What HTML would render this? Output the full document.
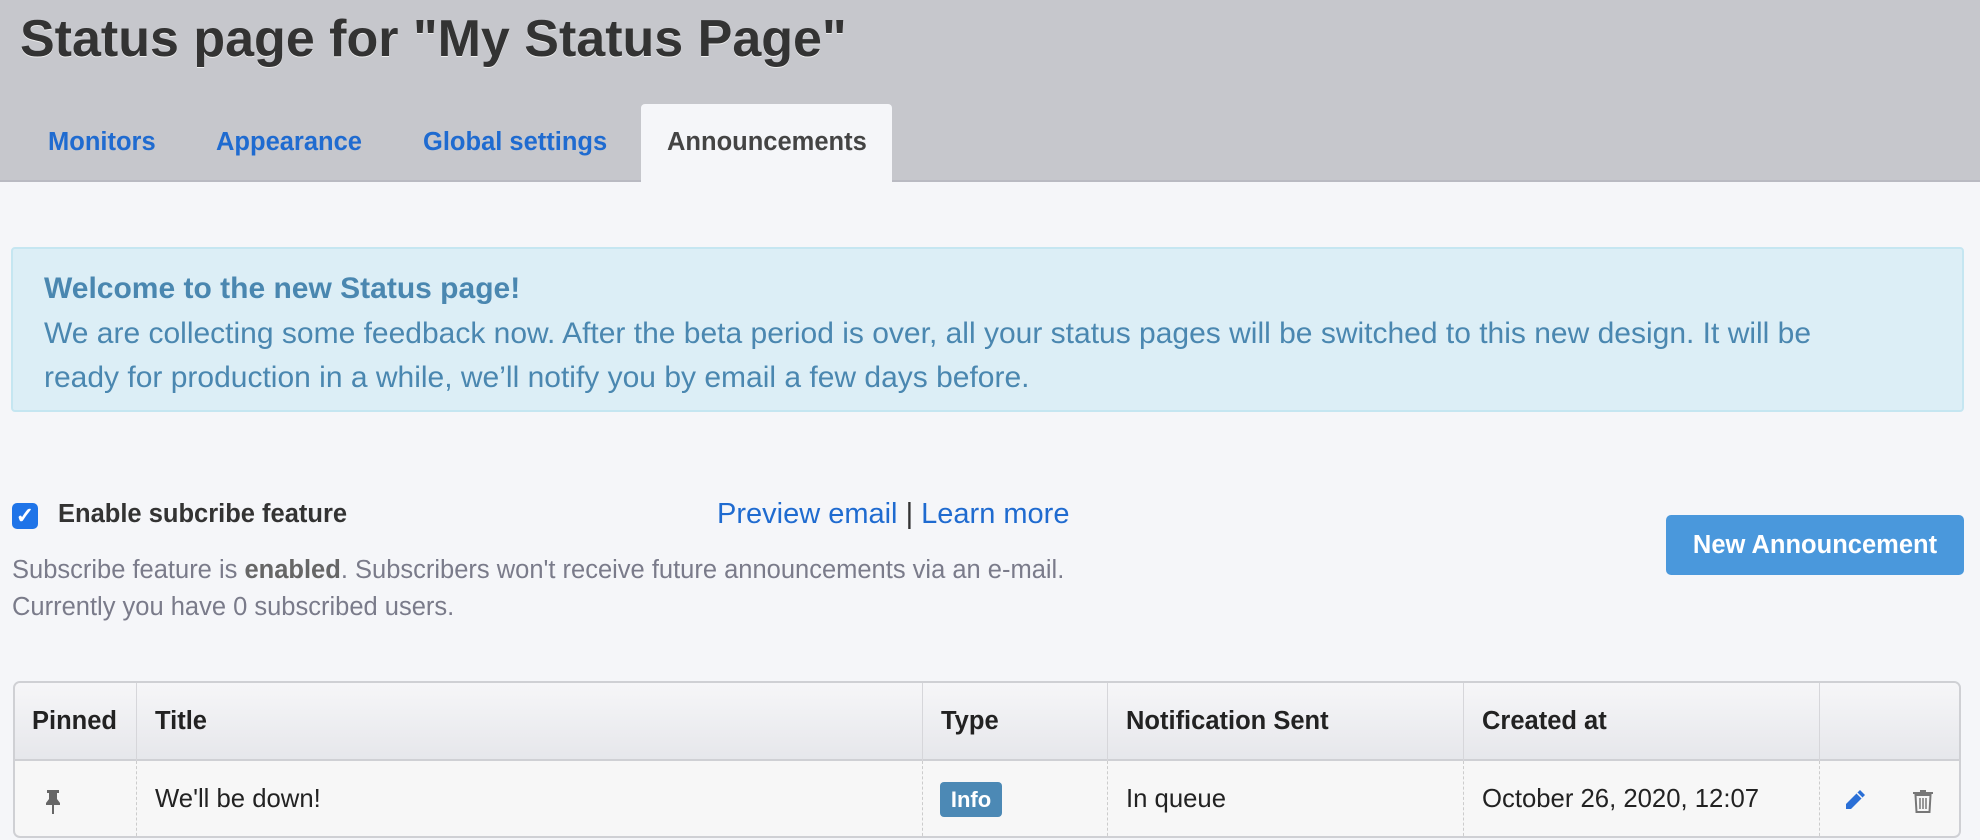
<!DOCTYPE html>
<html><head><meta charset="utf-8"><style>
*{margin:0;padding:0;box-sizing:border-box}
body{width:1980px;height:840px;background:#f5f6f9;font-family:"Liberation Sans",sans-serif;position:relative;overflow:hidden}
.a{position:absolute;white-space:nowrap}
.hdr{position:absolute;left:0;top:0;width:1980px;height:182px;background:#c6c7cc;border-bottom:2px solid #b9bac2}
h1{position:absolute;left:20px;top:9px;font-size:52px;font-weight:bold;color:#333;text-shadow:0 1px 0 #eee}
.tab{position:absolute;top:128px;font-size:25.5px;font-weight:bold;color:#1f6bd0}
.act{position:absolute;left:641px;top:104px;width:251px;height:80px;background:#f5f6f9;border-radius:4px 4px 0 0}
.alert{position:absolute;left:11px;top:247px;width:1953px;height:165px;background:#dceef6;border:2px solid #c5e6f1;border-radius:4px;color:#4a87b0;font-size:30px;line-height:44.5px;padding:18px 0 0 31px}
.btn{position:absolute;left:1666px;top:515px;width:298px;height:60px;background:#4a98dc;border-radius:5px;color:#fff;font-weight:bold;font-size:25.5px;text-align:center;line-height:60px}
.tbl{position:absolute;left:13px;top:681px;width:1948px;height:157px;border:2px solid #cfd0d4;border-radius:7px;overflow:hidden;background:#f7f7f7}
.th{position:absolute;left:0;top:0;width:100%;height:78px;background:linear-gradient(#f6f6f8,#e6e7eb);border-bottom:2px solid #cfd0d4}
.vl{position:absolute;top:0;height:78px;border-left:1px solid #d6d6da}
.vd{position:absolute;top:78px;height:80px;border-left:1px dashed #ccc}
.hd{position:absolute;top:24px;font-size:25.5px;font-weight:bold;color:#222}
.td{position:absolute;top:102px;font-size:25.7px;color:#222}
</style></head><body>
<div class="hdr"></div>
<h1>Status page for "My Status Page"</h1>
<div class="act"></div>
<div class="tab" style="left:48px">Monitors</div>
<div class="tab" style="left:216px">Appearance</div>
<div class="tab" style="left:423px">Global settings</div>
<div class="tab" style="left:667px;color:#444">Announcements</div>
<div class="alert"><b>Welcome to the new Status page!</b><br>We are collecting some feedback now. After the beta period is over, all your status pages will be switched to this new design. It will be<br>ready for production in a while, we’ll notify you by email a few days before.</div>
<div class="a" style="left:12px;top:503px;width:26px;height:26px;background:#1f74e8;border-radius:5px;color:#fff;font-size:22px;text-align:center;line-height:26px;font-weight:bold">✓</div>
<div class="a" style="left:58px;top:500px;font-size:25.5px;font-weight:bold;color:#333">Enable subcribe feature</div>
<div class="a" style="left:717px;top:498px;font-size:29px;color:#1f6bd0">Preview email <span style="color:#333">|</span> Learn more</div>
<div class="a" style="left:12px;top:552px;font-size:25.5px;color:#7a7b8a;line-height:37px">Subscribe feature is <b style="color:#666">enabled</b>. Subscribers won't receive future announcements via an e-mail.<br>Currently you have 0 subscribed users.</div>
<div class="btn">New Announcement</div>
<div class="tbl">
<div class="th"></div>
<div class="vl" style="left:121px"></div><div class="vl" style="left:907px"></div><div class="vl" style="left:1092px"></div><div class="vl" style="left:1448px"></div><div class="vl" style="left:1804px"></div>
<div class="vd" style="left:121px"></div><div class="vd" style="left:907px"></div><div class="vd" style="left:1092px"></div><div class="vd" style="left:1448px"></div><div class="vd" style="left:1804px"></div>
<div class="hd" style="left:17px">Pinned</div>
<div class="hd" style="left:140px">Title</div>
<div class="hd" style="left:926px">Type</div>
<div class="hd" style="left:1111px">Notification Sent</div>
<div class="hd" style="left:1467px">Created at</div>
<svg class="a" style="left:29px;top:106px" width="18" height="26" viewBox="0 0 18 26"><path d="M3 1h12v3h-2v6l3 4v2H2v-2l3-4V4H3z" fill="#666"/><rect x="8" y="16" width="2" height="9" fill="#666"/></svg>
<div class="td" style="left:140px">We'll be down!</div>
<div class="a" style="left:925px;top:99px;width:62px;height:35px;background:#4c89b5;border-radius:4px;color:#fff;font-weight:bold;font-size:22px;text-align:center;line-height:35px">Info</div>
<div class="td" style="left:1111px">In queue</div>
<div class="td" style="left:1467px">October 26, 2020, 12:07</div>
<svg class="a" style="left:1828px;top:105px" width="24" height="24" viewBox="0 0 24 24"><path d="M17 2l5 5L8 21H3v-5z" fill="#2a6fd6"/><path d="M14 5l5 5" stroke="#f7f7f7" stroke-width="1.5"/></svg>
<svg class="a" style="left:1897px;top:105px" width="22" height="26" viewBox="0 0 22 26"><path d="M8 2h6v2H8zM1 4h20v2H1z" fill="#777"/><path d="M3.5 7h15l-1 17h-13z" fill="none" stroke="#777" stroke-width="2"/><path d="M8 10v11M11 10v11M14 10v11" stroke="#777" stroke-width="1.5"/></svg>
</div>
</body></html>
